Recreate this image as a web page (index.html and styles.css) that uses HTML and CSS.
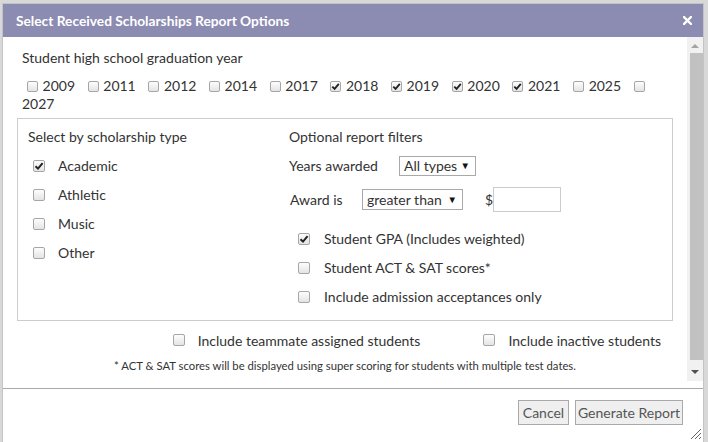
FILE: index.html
```html
<!DOCTYPE html>
<html lang="en">
<head>
    <meta charset="UTF-8">
    <meta name="viewport" content="width=device-width, initial-scale=1.0">
    <title>Select Received Scholarships Report Options</title>
    <link rel="stylesheet" href="styles.css">
</head>
<body>
    <div class="dialog">
        <div class="titlebar">
            <span class="title">Select Received Scholarships Report Options</span>
            <svg class="close" width="9" height="9" viewBox="0 0 9 9">
                <path d="M1 1 L8 8 M8 1 L1 8" stroke="#fff" stroke-width="2.4" stroke-linecap="square"/>
            </svg>
        </div>
        <div class="body">
            <div class="content">
                <p class="heading">Student high school graduation year</p>
                <div class="years"><label class="year"><span class="cb small"></span> 2009</label>
                    <label class="year"><span class="cb small"></span> 2011</label>
                    <label class="year"><span class="cb small"></span> 2012</label>
                    <label class="year"><span class="cb small"></span> 2014</label>
                    <label class="year"><span class="cb small"></span> 2017</label>
                    <label class="year"><span class="cb small checked"><svg viewBox="0 0 12 12"><path d="M2.5 6.2 L5 8.6 L9.6 3.2"/></svg></span> 2018</label>
                    <label class="year"><span class="cb small checked"><svg viewBox="0 0 12 12"><path d="M2.5 6.2 L5 8.6 L9.6 3.2"/></svg></span> 2019</label>
                    <label class="year"><span class="cb small checked"><svg viewBox="0 0 12 12"><path d="M2.5 6.2 L5 8.6 L9.6 3.2"/></svg></span> 2020</label>
                    <label class="year"><span class="cb small checked"><svg viewBox="0 0 12 12"><path d="M2.5 6.2 L5 8.6 L9.6 3.2"/></svg></span> 2021</label>
                    <label class="year"><span class="cb small"></span> 2025</label>
                    <label class="year"><span class="cb small"></span> 2027</label>
                </div>

                <div class="panel">
                    <div class="col-left">
                        <p class="col-title">Select by scholarship type</p>
                        <label class="check-row"><span class="cb checked"><svg viewBox="0 0 12 12"><path d="M2.5 6.2 L5 8.6 L9.6 3.2"/></svg></span>Academic</label>
                        <label class="check-row"><span class="cb"></span>Athletic</label>
                        <label class="check-row"><span class="cb"></span>Music</label>
                        <label class="check-row"><span class="cb"></span>Other</label>
                    </div>
                    <div class="col-right">
                        <p class="col-title">Optional report filters</p>
                        <div class="field">
                            <span class="field-label years-label">Years awarded</span>
                            <span class="select select-years">All types <span class="caret">&#9660;</span></span>
                        </div>
                        <div class="field field-award">
                            <span class="field-label award-label">Award is</span>
                            <span class="select select-award">greater than <span class="caret">&#9660;</span></span>
                            <span class="dollar">$</span>
                            <span class="amount"></span>
                        </div>
                        <div class="filters">
                            <label class="check-row"><span class="cb checked"><svg viewBox="0 0 12 12"><path d="M2.5 6.2 L5 8.6 L9.6 3.2"/></svg></span>Student GPA (Includes weighted)</label>
                            <label class="check-row"><span class="cb"></span>Student ACT &amp; SAT scores*</label>
                            <label class="check-row"><span class="cb"></span>Include admission acceptances only</label>
                        </div>
                    </div>
                </div>

                <div class="extras">
                    <label class="extra"><span class="cb"></span>Include teammate assigned students</label>
                    <label class="extra"><span class="cb"></span>Include inactive students</label>
                </div>
                <p class="note">* ACT &amp; SAT scores will be displayed using super scoring for students with multiple test dates.</p>
            </div>
            <div class="scrollbar">
                <span class="arrow arrow-up"></span>
                <span class="thumb"></span>
                <span class="arrow arrow-down"></span>
            </div>
        </div>
        <div class="footer">
            <button type="button" class="btn btn-cancel">Cancel</button>
            <button type="button" class="btn btn-generate">Generate Report</button>
        </div>
        <svg class="grip" width="12" height="12" viewBox="0 0 12 12">
            <path d="M11 1 L1 11 M11 5 L5 11 M11 9 L9 11" stroke="#666" stroke-width="1"/>
        </svg>
    </div>
</body>
</html>
```

FILE: styles.css
```css
* {
    box-sizing: border-box;
}
body {
    margin: 0;
    height: 442px;
    overflow: hidden;
    background-color: #d8d8d8;
    font-family: Lato, "Open Sans", sans-serif;
    font-size: 14px;
    color: #333;
}
p {
    margin: 0;
}
.dialog {
    position: relative;
    margin: 3px 0 0 2px;
    width: 702px;
    height: 440px;
    background: #fff;
    border: 1px solid #c4c4c4;
    display: flex;
    flex-direction: column;
}
.titlebar {
    height: 33px;
    flex-shrink: 0;
    background-color: #8c8bb2;
    color: #fff;
    display: flex;
    align-items: center;
    justify-content: space-between;
    padding: 0 11px 0 13px;
}
.title {
    font-weight: 700;
    font-size: 13.75px;
}
.body {
    display: flex;
    height: 351px;
    flex-shrink: 0;
    padding-bottom: 7px;
}
.content {
    flex: 1;
    padding: 12px 14px 0 14px;
}
.heading {
    line-height: 18px;
    margin: 0 0 10px 5px;
}
.years {
    line-height: 18px;
    padding-left: 5px;
    height: 36px;
}
.year {
    margin-right: 4px;
}
.cb {
    display: inline-block;
    width: 12px;
    height: 12px;
    flex-shrink: 0;
    border: 1px solid #a6a6a6;
    border-radius: 2px;
    background: linear-gradient(#fdfdfd, #e4e4e4);
    position: relative;
}
.cb.small {
    width: 11px;
    height: 11px;
    margin-left: 5px;
    margin-right: 1px;
    vertical-align: -1px;
}
.cb svg {
    position: absolute;
    left: -1px;
    top: -1px;
    width: 12px;
    height: 12px;
}
.cb.small svg {
    width: 11px;
    height: 11px;
}
.cb svg path {
    fill: none;
    stroke: #222;
    stroke-width: 2;
}
.panel {
    margin-top: 5px;
    border: 1px solid #ccc;
    display: flex;
    padding: 9px 0 9px 10px;
}
.col-left {
    width: 261px;
}
.col-right {
    flex: 1;
}
.col-title {
    line-height: 18px;
    margin-bottom: 5px;
}
.check-row {
    display: flex;
    align-items: center;
    height: 29px;
}
.col-left .cb {
    margin: 0 13px 0 5px;
}
.filters {
    margin-top: 10px;
}
.filters .cb {
    margin: 0 14px 0 9px;
}
.field {
    display: flex;
    align-items: center;
    height: 29px;
}
.field-award {
    margin-top: 5px;
}
.years-label {
    width: 110px;
}
.award-label {
    width: 73px;
    padding-left: 1px;
}
.select {
    display: flex;
    align-items: center;
    justify-content: space-between;
    border: 1px solid #a9a9a9;
    background: #fff;
    color: #333;
    padding: 0 5px 0 4px;
}
.select-years {
    width: 77px;
    height: 20px;
}
.select-award {
    width: 101px;
    height: 21px;
}
.caret {
    font-size: 9.5px;
    color: #111;
}
.dollar {
    margin-left: 22px;
}
.amount {
    width: 68px;
    height: 25px;
    border: 1px solid #ccc;
}
.extras {
    display: flex;
    justify-content: flex-end;
    gap: 63px;
    margin-top: 9px;
    padding-right: 12px;
    height: 20px;
}
.extra {
    display: flex;
    align-items: center;
}
.extra .cb {
    margin-right: 13px;
}
.note {
    margin-top: 8px;
    line-height: 16px;
    font-size: 11.3px;
    text-align: center;
}
.scrollbar {
    width: 16px;
    background: #f1f1f1;
    display: flex;
    flex-direction: column;
    align-items: center;
}
.arrow {
    width: 0;
    height: 0;
    border-left: 4px solid transparent;
    border-right: 4px solid transparent;
}
.arrow-up {
    border-bottom: 4px solid #a3a3a3;
    margin: 7px 0 5px;
}
.arrow-down {
    border-top: 4px solid #505050;
    margin: 10px 0 7px;
}
.thumb {
    flex: 1;
    width: 13px;
    margin-left: 2px;
    background: #c1c1c1;
}
.footer {
    border-top: 1px solid #aaa;
    flex: 1;
    display: flex;
    justify-content: flex-end;
    align-items: flex-start;
    gap: 6px;
    padding: 11px 20px 0 0;
}
.btn {
    height: 25px;
    padding: 0;
    background-color: #efefef;
    border: 1px solid #a9a9a9;
    border-radius: 0;
    color: #555;
    font-family: Lato, "Open Sans", sans-serif;
    font-size: 14px;
}
.btn-cancel {
    width: 51px;
}
.btn-generate {
    width: 108px;
}
.grip {
    position: absolute;
    right: 1px;
    bottom: 2px;
}
```
